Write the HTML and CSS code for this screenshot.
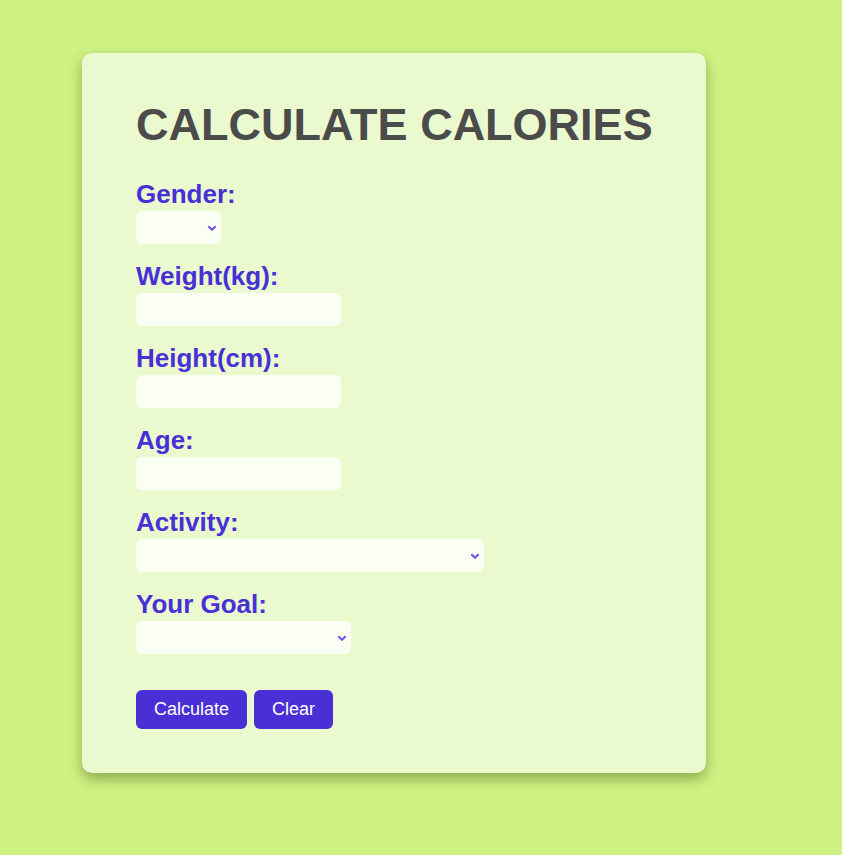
FILE: index.html
```html
<!DOCTYPE html>
<html lang="en">
<head>
<meta charset="utf-8">
<title>Calculate Calories</title>
<link rel="stylesheet" href="styles.css">
</head>
<body>
<main class="card">
  <h1 class="title">CALCULATE CALORIES</h1>
  <form class="form">
    <div class="group">
      <label class="label" for="gender">Gender:</label>
      <select id="gender" class="field select gender"></select>
    </div>
    <div class="group">
      <label class="label" for="weight">Weight(kg):</label>
      <input id="weight" class="field input" type="text">
    </div>
    <div class="group">
      <label class="label" for="height">Height(cm):</label>
      <input id="height" class="field input" type="text">
    </div>
    <div class="group">
      <label class="label" for="age">Age:</label>
      <input id="age" class="field input" type="text">
    </div>
    <div class="group">
      <label class="label" for="activity">Activity:</label>
      <select id="activity" class="field select activity"></select>
    </div>
    <div class="group">
      <label class="label" for="goal">Your Goal:</label>
      <select id="goal" class="field select goal"></select>
    </div>
    <div class="actions">
      <button type="button" class="btn calc">Calculate</button>
      <button type="button" class="btn clear">Clear</button>
    </div>
  </form>
</main>
</body>
</html>
```
FILE: styles.css
```css
html, body {
  margin: 0;
  padding: 0;
}
body {
  background: #cff383;
  font-family: "Liberation Sans", Arial, sans-serif;
  min-height: 855px;
  padding: 53px 0 0 82px;
  box-sizing: border-box;
}
.card {
  width: 624px;
  height: 720px;
  box-sizing: border-box;
  background: #ebf9cf;
  border-radius: 10px;
  box-shadow: 0 6px 14px rgba(60, 80, 20, 0.45);
  padding: 46px 54px 44px 54px;
}
.title {
  margin: 0;
  font-size: 45px;
  font-weight: bold;
  color: #4b4b4b;
  line-height: 52px;
  white-space: nowrap;
}
.form {
  display: flex;
  flex-direction: column;
  margin-top: 28px;
}
.group {
  display: flex;
  flex-direction: column;
  align-items: flex-start;
  margin-bottom: 17px;
}
.label {
  font-size: 26px;
  font-weight: bold;
  color: #4a2fd6;
  line-height: 30px;
  margin-bottom: 2px;
}
.field {
  height: 33px;
  box-sizing: border-box;
  border: none;
  border-radius: 6px;
  background-color: #fbfff3;
  font-family: "Liberation Sans", Arial, sans-serif;
  font-size: 16px;
  outline: none;
  padding: 0 8px;
}
.input {
  width: 205px;
}
.select {
  appearance: none;
  -webkit-appearance: none;
  background-image: url("data:image/svg+xml;utf8,<svg xmlns='http://www.w3.org/2000/svg' width='10' height='6' viewBox='0 0 10 6'><path d='M1.3 1.2 L5 4.8 L8.7 1.2' fill='none' stroke='%236f52e6' stroke-width='2'/></svg>");
  background-repeat: no-repeat;
  background-position: right 4px center;
  background-size: 10px 6px;
}
.gender { width: 85px; }
.activity { width: 348px; }
.goal { width: 215px; }
.actions {
  display: flex;
  gap: 7px;
  margin-top: 19px;
}
.btn {
  height: 39px;
  border: none;
  border-radius: 6px;
  background: #4a2fd6;
  color: #ffffff;
  font-family: "Liberation Sans", Arial, sans-serif;
  font-size: 18px;
  padding: 0;
  cursor: pointer;
}
.calc { width: 111px; }
.clear { width: 79px; }
```
